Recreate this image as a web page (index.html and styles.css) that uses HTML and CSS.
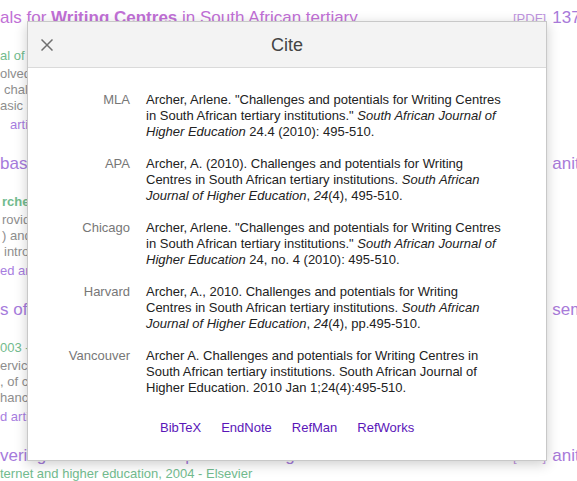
FILE: index.html
```html
<!DOCTYPE html>
<html lang="en">
<head>
<meta charset="utf-8">
<title>Cite</title>
<link rel="stylesheet" href="styles.css">
</head>
<body>
<div class="page">
  <div class="result">
    <div class="main">
      <h3 class="rt visited wrap">als for <b>Writing Centres</b> in South African tertiary</h3>
      <div class="meta">al of Higher Education, 2010 - journals.co.za</div>
      <div class="snip">
        <div>olved in the provision of academic literacy support</div>
        <div class="in4">challenges and potentials of writing centres</div>
        <div>asic access to higher education in South Africa</div>
      </div>
      <div class="links in10">articles All 5 versions</div>
    </div>
    <div class="side"><span class="tag">[PDF]</span><span class="dom">137.215.9.22</span></div>
  </div>

  <div class="result">
    <div class="main">
      <h3 class="rt wrap">based writing centre practice</h3>
      <div class="meta in2"><b>rcher</b> - South African Journal of Higher Education, 2008</div>
      <div class="snip">
        <div class="in2">rovides a reflection on the role of the centre</div>
        <div class="in2">) and the development of student writers</div>
        <div class="in4">introduces the context of the writing centre</div>
      </div>
      <div class="links">ed articles All 3 versions</div>
    </div>
    <div class="side"><span class="tag">[PDF]</span><span class="dom">anitaweb.co.za</span></div>
  </div>

  <div class="result">
    <div class="main">
      <h3 class="rt wrap">s of writing centre work</h3>
      <div class="meta">003 - Taylor &amp; Francis</div>
      <div class="snip">
        <div>ervices offered to students at the university</div>
        <div>, of course, the writing centre consultants</div>
        <div>hance the quality of student writing</div>
      </div>
      <div class="links">d articles All 4 versions</div>
    </div>
    <div class="side"><span class="tag">[PDF]</span><span class="dom">semanticscholar.org</span></div>
  </div>

  <div class="result">
    <div class="main">
      <h3 class="rt">vering its transformative potential in higher education</h3>
      <div class="meta">ternet and higher education, 2004 - Elsevier</div>
    </div>
    <div class="side"><span class="tag">[PDF]</span><span class="dom">anitacrawley.net</span></div>
  </div>
</div>

<div class="dialog" role="dialog" aria-label="Cite">
  <div class="dlg-head">
    <button class="close" aria-label="Close">
      <svg width="12" height="12" viewBox="0 0 12 12"><path d="M0.5 0.5 L11.5 11.5 M11.5 0.5 L0.5 11.5" stroke="#6f6f6f" stroke-width="1.5" fill="none"/></svg>
    </button>
    <h2 class="dlg-title">Cite</h2>
    <span></span>
  </div>
  <div class="dlg-body">
    <div class="cites">
      <div class="label">MLA</div>
      <div class="cite">Archer, Arlene. "Challenges and potentials for Writing Centres in South African tertiary institutions." <i>South African Journal of Higher Education</i> 24.4 (2010): 495-510.</div>

      <div class="label">APA</div>
      <div class="cite">Archer, A. (2010). Challenges and potentials for Writing Centres in South African tertiary institutions. <i>South African Journal of Higher Education</i>, <i>24</i>(4), 495-510.</div>

      <div class="label">Chicago</div>
      <div class="cite">Archer, Arlene. "Challenges and potentials for Writing Centres in South African tertiary institutions." <i>South African Journal of Higher Education</i> 24, no. 4 (2010): 495-510.</div>

      <div class="label">Harvard</div>
      <div class="cite">Archer, A., 2010. Challenges and potentials for Writing Centres in South African tertiary institutions. <i>South African Journal of Higher Education</i>, <i>24</i>(4), pp.495-510.</div>

      <div class="label">Vancouver</div>
      <div class="cite">Archer A. Challenges and potentials for Writing Centres in South African tertiary institutions. South African Journal of Higher Education. 2010 Jan 1;24(4):495-510.</div>
    </div>
    <div class="exports">
      <a href="#">BibTeX</a>
      <a href="#">EndNote</a>
      <a href="#">RefMan</a>
      <a href="#">RefWorks</a>
    </div>
  </div>
</div>
</body>
</html>
```
FILE: styles.css
```css
html, body {
  margin: 0;
  padding: 0;
  background: #fff;
  font-family: "Liberation Sans", Arial, sans-serif;
  overflow: hidden;
}

.page {
  padding-top: 8px;
  width: 577px;
}

.result {
  display: grid;
  grid-template-columns: 513px 1fr;
  margin-bottom: 21px;
  white-space: nowrap;
}

.main { min-width: 0; }

.rt {
  margin: 0;
  font-size: 17px;
  line-height: 20px;
  font-weight: normal;
  color: #a67bdc;
}
.rt.wrap { margin-bottom: 20px; }
.rt.visited { color: #c170d6; }
.rt b { font-weight: bold; }

.meta {
  font-size: 13px;
  line-height: 16px;
  color: #72bb8e;
}
.meta b { font-weight: bold; }

.snip {
  margin-top: 2px;
  font-size: 13px;
  line-height: 16px;
  color: #8e8e8e;
}

.links {
  margin-top: 3px;
  font-size: 13px;
  line-height: 16px;
  color: #a77ddf;
}

.in2 { padding-left: 2px; }
.in4 { padding-left: 4px; }
.in10 { padding-left: 10px; }

.side {
  line-height: 20px;
  color: #a87ad9;
}
.side .tag {
  font-size: 13px;
  color: #c095e0;
  margin-right: 6px;
}
.side .dom { font-size: 17px; }

/* dialog */
.dialog {
  position: absolute;
  left: 27px;
  top: 21px;
  width: 518px;
  height: 438px;
  background: #fff;
  border: 1px solid #c8c8c8;
  box-shadow: 0 3px 12px rgba(0, 0, 0, 0.2);
  display: flex;
  flex-direction: column;
}

.dlg-head {
  height: 46px;
  background: #f3f3f3;
  border-bottom: 1px solid #dadada;
  display: grid;
  grid-template-columns: 1fr auto 1fr;
  align-items: center;
}

.close {
  justify-self: start;
  margin-left: 13px;
  padding: 0;
  border: 0;
  background: none;
  width: 12px;
  height: 12px;
  display: block;
}
.close svg { display: block; }

.dlg-title {
  margin: 0;
  font-size: 18px;
  font-weight: normal;
  color: #444;
  line-height: 22px;
}

.dlg-body {
  padding: 24px 0;
}

.cites {
  display: grid;
  grid-template-columns: 102px 360px;
  column-gap: 16px;
  row-gap: 16px;
  font-size: 13px;
  line-height: 16px;
}

.label {
  text-align: right;
  color: #777;
}

.cite { color: #222; }

.exports {
  margin-top: 24px;
  padding-left: 132px;
  display: flex;
  gap: 20px;
  font-size: 13px;
  line-height: 16px;
}
.exports a {
  color: #5a16b8;
  text-decoration: none;
}
```
